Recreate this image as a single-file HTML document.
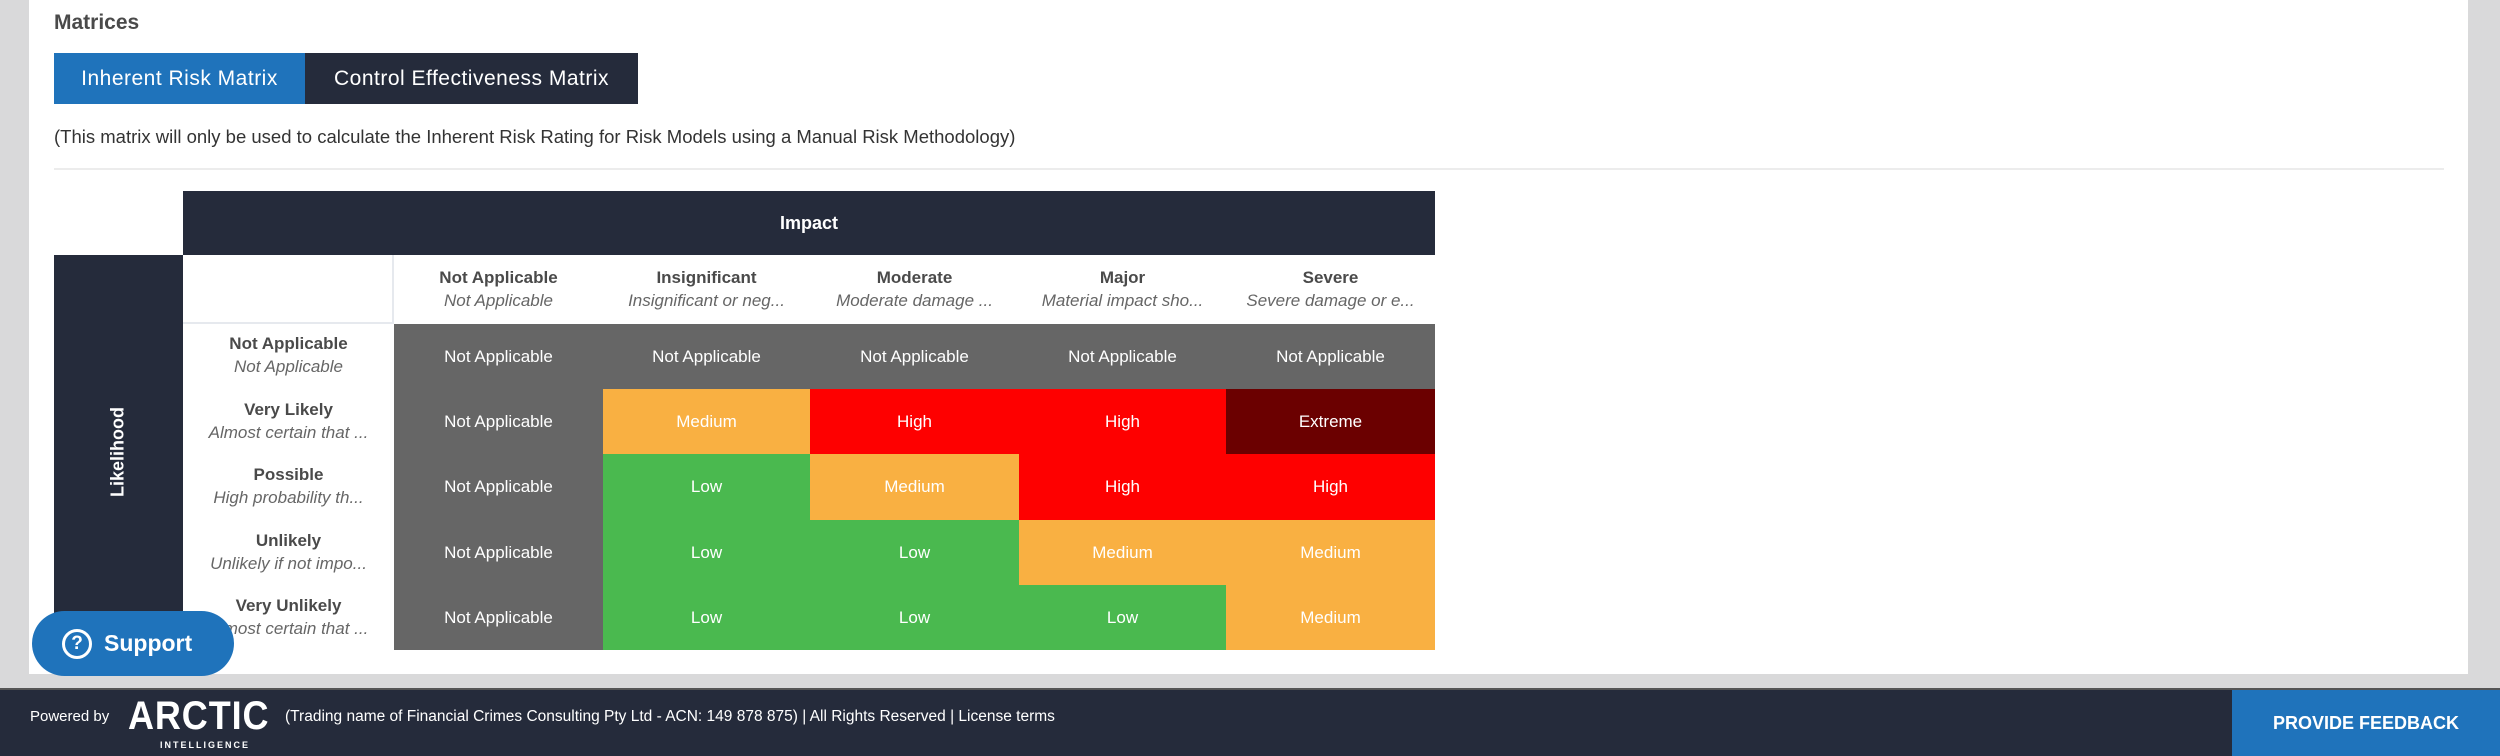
<!DOCTYPE html>
<html><head><meta charset="utf-8"><style>
*{margin:0;padding:0;box-sizing:border-box}
body{width:2500px;height:756px;overflow:hidden;background:#d9d9da;font-family:"Liberation Sans",sans-serif;position:relative}
.panel{position:absolute;left:29px;top:0;width:2439px;height:674px;background:#fff}
.abs{position:absolute}
.title{left:54px;top:11px;font-size:21px;font-weight:bold;color:#4a4a4a}
.tab{top:53px;height:51px;color:#fff;font-size:21px;line-height:51px;text-align:center;letter-spacing:.5px}
.note{left:54px;top:126px;font-size:18.5px;color:#333}
.hr{left:54px;top:168px;width:2390px;height:2px;background:#ececec}
.dark{background:#252b3b}
.c{position:absolute;display:flex;align-items:center;justify-content:center;color:#fff;font-size:17px;text-align:center}
.h{position:absolute;text-align:center;color:#555;font-size:17px;line-height:23px;white-space:nowrap;overflow:hidden}
.h b{display:block;color:#4a4a4a}
.h i{display:block;color:#666}
.g{background:#666}.o{background:#f9b042}.r{background:#fe0000}.dr{background:#6b0000}.gr{background:#4ab94f}
</style></head><body>
<div class="panel"></div>
<div class="abs title">Matrices</div>
<div class="abs tab" style="left:54px;width:251px;background:#1f73bb">Inherent Risk Matrix</div>
<div class="abs tab dark" style="left:305px;width:333px">Control Effectiveness Matrix</div>
<div class="abs note">(This matrix will only be used to calculate the Inherent Risk Rating for Risk Models using a Manual Risk Methodology)</div>
<div class="abs hr"></div>
<div class="c dark" style="left:183px;top:191px;width:1252px;height:64px;font-weight:bold;font-size:18px">Impact</div>
<div class="abs dark" style="left:54px;top:255px;width:129px;height:395px"></div>
<div class="abs" style="left:118px;top:452px;transform:translate(-50%,-50%) rotate(-90deg);color:#fff;font-weight:bold;font-size:18px;white-space:nowrap">Likelihood</div>
<div class="abs" style="left:392px;top:255px;width:2px;height:69px;background:#e6e9ee"></div>
<div class="abs" style="left:183px;top:322px;width:211px;height:2px;background:#e6e9ee"></div>
<div class="h" style="left:394px;top:266px;width:209px"><b>Not Applicable</b><i>Not Applicable</i></div>
<div class="h" style="left:603px;top:266px;width:207px"><b>Insignificant</b><i>Insignificant or neg...</i></div>
<div class="h" style="left:810px;top:266px;width:209px"><b>Moderate</b><i>Moderate damage ...</i></div>
<div class="h" style="left:1019px;top:266px;width:207px"><b>Major</b><i>Material impact sho...</i></div>
<div class="h" style="left:1226px;top:266px;width:209px"><b>Severe</b><i>Severe damage or e...</i></div>
<div class="h" style="left:183px;top:332px;width:211px"><b>Not Applicable</b><i>Not Applicable</i></div>
<div class="h" style="left:183px;top:398px;width:211px"><b>Very Likely</b><i>Almost certain that ...</i></div>
<div class="h" style="left:183px;top:463px;width:211px"><b>Possible</b><i>High probability th...</i></div>
<div class="h" style="left:183px;top:529px;width:211px"><b>Unlikely</b><i>Unlikely if not impo...</i></div>
<div class="h" style="left:183px;top:594px;width:211px"><b>Very Unlikely</b><i>Almost certain that ...</i></div>
<div class="c g" style="left:394px;top:324px;width:209px;height:65px">Not Applicable</div>
<div class="c g" style="left:603px;top:324px;width:207px;height:65px">Not Applicable</div>
<div class="c g" style="left:810px;top:324px;width:209px;height:65px">Not Applicable</div>
<div class="c g" style="left:1019px;top:324px;width:207px;height:65px">Not Applicable</div>
<div class="c g" style="left:1226px;top:324px;width:209px;height:65px">Not Applicable</div>
<div class="c g" style="left:394px;top:389px;width:209px;height:65px">Not Applicable</div>
<div class="c o" style="left:603px;top:389px;width:207px;height:65px">Medium</div>
<div class="c r" style="left:810px;top:389px;width:209px;height:65px">High</div>
<div class="c r" style="left:1019px;top:389px;width:207px;height:65px">High</div>
<div class="c dr" style="left:1226px;top:389px;width:209px;height:65px">Extreme</div>
<div class="c g" style="left:394px;top:454px;width:209px;height:66px">Not Applicable</div>
<div class="c gr" style="left:603px;top:454px;width:207px;height:66px">Low</div>
<div class="c o" style="left:810px;top:454px;width:209px;height:66px">Medium</div>
<div class="c r" style="left:1019px;top:454px;width:207px;height:66px">High</div>
<div class="c r" style="left:1226px;top:454px;width:209px;height:66px">High</div>
<div class="c g" style="left:394px;top:520px;width:209px;height:65px">Not Applicable</div>
<div class="c gr" style="left:603px;top:520px;width:207px;height:65px">Low</div>
<div class="c gr" style="left:810px;top:520px;width:209px;height:65px">Low</div>
<div class="c o" style="left:1019px;top:520px;width:207px;height:65px">Medium</div>
<div class="c o" style="left:1226px;top:520px;width:209px;height:65px">Medium</div>
<div class="c g" style="left:394px;top:585px;width:209px;height:65px">Not Applicable</div>
<div class="c gr" style="left:603px;top:585px;width:207px;height:65px">Low</div>
<div class="c gr" style="left:810px;top:585px;width:209px;height:65px">Low</div>
<div class="c gr" style="left:1019px;top:585px;width:207px;height:65px">Low</div>
<div class="c o" style="left:1226px;top:585px;width:209px;height:65px">Medium</div>
<div class="abs" style="left:32px;top:611px;width:202px;height:65px;border-radius:33px;background:#1f73bb;color:#fff;display:flex;align-items:center;padding-left:30px;font-weight:bold;font-size:23px">
<span style="width:30px;height:30px;border:3px solid #fff;border-radius:50%;display:inline-flex;align-items:center;justify-content:center;font-size:19px;margin-right:12px">?</span>Support</div>
<div class="abs" style="left:0;top:688px;width:2500px;height:2px;background:#555"></div>
<div class="abs dark" style="left:0;top:690px;width:2500px;height:66px"></div>
<div class="abs" style="left:30px;top:708px;color:#fff;font-size:15px">Powered by</div>
<div class="abs" style="left:128px;top:694px;color:#fff;font-size:40px;font-weight:bold;letter-spacing:1px;transform:scaleX(.9);transform-origin:left">ARCTIC</div>
<div class="abs" style="left:160px;top:740px;color:#fff;font-size:9px;font-weight:bold;letter-spacing:2px">INTELLIGENCE</div>
<div class="abs" style="left:285px;top:708px;color:#fff;font-size:15.5px">(Trading name of Financial Crimes Consulting Pty Ltd - ACN: 149 878 875) | All Rights Reserved | License terms</div>
<div class="abs" style="left:2232px;top:690px;width:268px;height:66px;background:#1f73bb;color:#fff;font-weight:bold;font-size:18px;display:flex;align-items:center;justify-content:center">PROVIDE FEEDBACK</div>
</body></html>
